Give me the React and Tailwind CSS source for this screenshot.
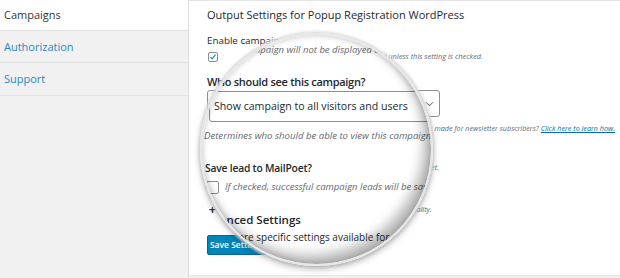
import React from "react";

function Check({ checked, size = 10 }) {
  return (
    <span
      className="inline-flex shrink-0 items-center justify-center rounded-[2px] border border-[#8c8f94] bg-white"
      style={{ width: size, height: size }}
    >
      {checked && (
        <svg viewBox="0 0 12 12" width={size} height={size}>
          <path d="M2.2 6.2 L4.8 8.8 L9.8 2.6" fill="none" stroke="#1e8cbe" strokeWidth="1.8" />
        </svg>
      )}
    </span>
  );
}

function Chevron() {
  return (
    <svg viewBox="0 0 10 6" width="9" height="6">
      <path d="M1 1 L5 5 L9 1" fill="none" stroke="#555" strokeWidth="1.1" />
    </svg>
  );
}

export default function App() {
  return (
    <div className="relative flex h-[278px] w-[620px] overflow-hidden bg-white font-['Open_Sans',sans-serif] text-[#23282d]">
      {/* sidebar */}
      <div className="flex w-[189px] shrink-0 flex-col border-r border-[#dcdcde] bg-[#f1f1f1]">
        <div className="flex h-[31px] items-center border-b border-[#e2e2e2] bg-white pl-[4px] text-[11px] text-[#32373c]">
          Campaigns
        </div>
        <div className="flex h-[32px] items-center border-b border-[#e2e2e2] pl-[4px] pt-[1px] text-[11px] text-[#2a88bd]">
          Authorization
        </div>
        <div className="flex h-[33px] items-center border-b border-[#e2e2e2] pl-[4px] text-[11px] text-[#2a88bd]">
          Support
        </div>
      </div>

      {/* main */}
      <div className="flex flex-1 flex-col border-t border-[#e5e5e5]">
        <div className="flex flex-1 flex-col pl-[18px]">
          <div className="mt-[6px] h-[16px] text-[11px] leading-[16px]">
            Output Settings for Popup Registration WordPress
          </div>
          <div className="mt-[12px] h-[12px] text-[9.8px] leading-[12px]">Enable campaign</div>
          <div className="mt-[4px] flex h-[12px] items-center gap-[4px] pl-[1px]">
            <Check checked size={10} />
            <span className="w-[261px] whitespace-nowrap text-right text-[7.4px] italic text-[#646970]">
              The campaign will not be displayed unless this setting is checked.
            </span>
          </div>
          <div className="mt-[11px] h-[16px] text-[11px] font-semibold leading-[16px] tracking-[-0.3px]">
            Who should see this campaign?
          </div>
          <div className="flex h-[27px] w-[233px] items-center justify-between rounded-[3px] border border-[#8c8f94] pl-[5px] pr-[5px] text-[10.5px]">
            <span>Show campaign to all visitors and users</span>
            <Chevron />
          </div>
          <div className="mt-[6px] flex h-[10px] w-[408px] justify-between whitespace-nowrap text-[7.2px] italic leading-[10px] text-[#646970]">
            <span>Determines who should be able to view this campaign.</span>
            <span>
              Is this made for newsletter subscribers?{" "}
              <span className="text-[#0073aa] underline">Click here to learn how.</span>
            </span>
          </div>
          <div className="mt-[10px] h-[14px] text-[10px] font-semibold leading-[14px]">Save lead to MailPoet?</div>
          <div className="mt-[5px] flex h-[12px] items-center gap-[7px]">
            <Check size={10} />
            <span className="w-[215px] whitespace-nowrap text-right text-[7.4px] italic text-[#646970]">
              If checked, successful campaign leads will be saved to MailPoet.
            </span>
          </div>
          <div className="mt-[30px] flex h-[12px] items-center gap-[4px] pl-[2px]">
            <span className="text-[12px] font-bold leading-[12px]">+</span>
            <span className="w-[212px] whitespace-nowrap text-right text-[7.4px] italic text-[#646970]">
              Advanced Settings for MailPoet functionality.
            </span>
          </div>
          <div className="mt-[19px] flex h-[20px] w-[60px] items-center justify-center rounded-[2px] border border-[#006799] bg-[#0085ba] text-[8.5px] font-semibold text-white">
            Save Settings
          </div>
        </div>
        <div className="h-[3px] border-t border-[#e5e5e5] bg-[#f1f1f1]" />
      </div>

      {/* magnifier lens */}
      <div className="pointer-events-none absolute left-[200px] top-[33px] h-[233px] w-[233px] overflow-hidden rounded-full bg-white">
        <div className="absolute left-[-200px] top-[-33px] flex w-[620px] flex-col whitespace-nowrap">
          <div className="ml-[225px] mt-[43px] h-[14px] text-[9.5px] italic leading-[14px] text-[#646970]">
            The campaign will not be displayed unless this setting is checked.
          </div>
          <div className="ml-[208px] mt-[17px] h-[16px] text-[11px] font-semibold leading-[16px] tracking-[-0.3px]">
            Who should see this campaign?
          </div>
          <div className="ml-[209px] mt-[1px] flex h-[31px] w-[280px] items-center rounded-[3px] border border-[#8c8f94] pl-[4px] text-[10.6px]">
            Show campaign to all visitors and users
          </div>
          <div className="ml-[204px] mt-[7px] h-[14px] text-[9.6px] italic leading-[14px] text-[#646970]">
            Determines who should be able to view this campaign.
          </div>
          <div className="ml-[205px] mt-[17px] h-[16px] text-[10.3px] font-semibold leading-[16px] tracking-[-0.2px]">
            Save lead to MailPoet?
          </div>
          <div className="ml-[206px] mt-[3px] flex h-[16px] items-center gap-[6px]">
            <Check size={13} />
            <span className="text-[9.5px] italic text-[#646970]">
              If checked, successful campaign leads will be saved to MailPoet.
            </span>
          </div>
          <div className="ml-[199px] mt-[17px] h-[16px] text-[11.5px] font-semibold leading-[16px]">
            Advanced Settings
          </div>
          <div className="ml-[229px] mt-[1px] h-[16px] text-[10px] leading-[16px]">
            More specific settings available for campaigns
          </div>
        </div>
      </div>
      <div className="pointer-events-none absolute left-[200px] top-[33px] h-[233px] w-[233px] rounded-full border-[2px] border-[#e6e6e6] shadow-[inset_0_0_6px_rgba(0,0,0,0.22),inset_-7px_-9px_12px_rgba(0,0,0,0.28),0_3px_7px_rgba(0,0,0,0.28),0_0_2px_2px_rgba(235,235,235,0.9)]" />
    </div>
  );
}
